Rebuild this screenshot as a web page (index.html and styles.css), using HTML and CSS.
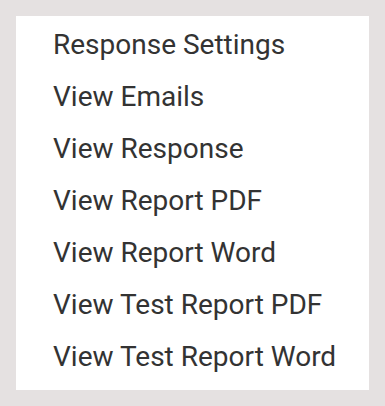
FILE: index.html
```html
<!DOCTYPE html>
<html>
<head>
<meta charset="utf-8">
<link rel="stylesheet" href="styles.css">
</head>
<body>
<ul class="menu">
  <li class="menu-item">Response Settings</li>
  <li class="menu-item">View Emails</li>
  <li class="menu-item">View Response</li>
  <li class="menu-item">View Report PDF</li>
  <li class="menu-item">View Report Word</li>
  <li class="menu-item">View Test Report PDF</li>
  <li class="menu-item">View Test Report Word</li>
</ul>
</body>
</html>
```
FILE: styles.css
```css
html, body {
  margin: 0;
  padding: 0;
}
body {
  background: #e5e1e1;
  padding: 16px;
  width: 385px;
  height: 406px;
  box-sizing: border-box;
  font-family: Roboto, "Noto Sans", sans-serif;
}
.menu {
  list-style: none;
  margin: 0;
  padding: 3px 0 7px;
  width: 353px;
  background: #ffffff;
  box-sizing: border-box;
}
.menu-item {
  padding-left: 37px;
  height: 52px;
  line-height: 52px;
  font-size: 28px;
  color: #333333;
  white-space: nowrap;
}
```
